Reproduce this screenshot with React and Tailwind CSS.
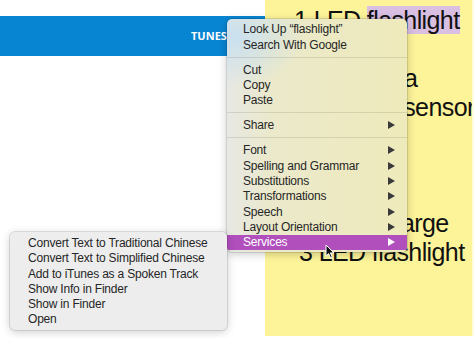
const font = { fontFamily: '"Liberation Sans", Arial, sans-serif' };

const Arrow = ({ light }) => (
    <svg width="7" height="8" viewBox="0 0 7 8" className="shrink-0">
        <polygon points="0,0 7,4 0,8" fill={light ? '#ffffff' : '#3a3a3a'} />
    </svg>
);

const Item = ({ label, sub, active }) => (
    <div
        className={`h-[15.35px] flex items-center justify-between pl-[16px] pr-[12px] text-[12px] tracking-[-0.2px] leading-none ${active ? 'bg-[#b14fbd] text-white' : 'text-[#262626]'}`}
    >
        <span>{label}</span>
        {sub && <Arrow light={active} />}
    </div>
);

const Sep = () => (
    <div className="h-[9.7px] flex items-center">
        <div className="h-px w-full bg-black/10" />
    </div>
);

const Cursor = () => (
    <svg width="10" height="15" viewBox="0 0 10 15" className="absolute left-[325px] top-[244px]">
        <path d="M1 1 L1 12 L3.6 9.6 L5.6 14 L7.3 13.2 L5.4 8.9 L9 8.9 Z" fill="#111" stroke="#fff" strokeWidth="1" />
    </svg>
);

export default function App() {
    return (
        <div className="relative w-[474px] h-[338px] overflow-hidden bg-white flex" style={font}>
            {/* page behind */}
            <div className="w-[265px] pt-[16px]">
                <div className="h-[40px] bg-[#0885d2] flex items-center pl-[191px]">
                    <span className="text-white text-[11px] font-bold" style={{ fontFamily: '"Open Sans", sans-serif' }}>
                        TUNES
                    </span>
                </div>
            </div>

            {/* sticky note */}
            <div className="w-[207px] h-[336px] bg-[#fdf49a] pt-[6px] text-[25px] leading-[29px] tracking-[-0.6px] text-[#111] whitespace-nowrap">
                <div className="pl-[29px]">
                    1 LED <span className="bg-[#d9bfe2]">flashlight</span>
                </div>
                <div className="h-[29px]" />
                <div className="pl-[24px]">Lamp with a</div>
                <div className="pl-[92px]">PIR sensor</div>
                <div className="h-[29px]" />
                <div className="h-[29px]" />
                <div className="h-[29px]" />
                <div className="pl-[103px]">1 Large</div>
                <div className="pl-[34px]">3 LED flashlight</div>
            </div>
            <div className="flex-1 h-[336px] bg-[#fffbe0]" />

            {/* context menu */}
            <div className="absolute left-[227px] top-[19px] w-[180px] h-[233px] rounded-[5px] bg-[radial-gradient(ellipse_70px_50px_at_8px_18px,#c9e0ee,transparent),linear-gradient(to_right,#e7e8e4,#ebe9cb_24%,#eeeabb)] shadow-[0_2px_10px_rgba(0,0,0,0.22)] ring-1 ring-black/10 py-[2.6px] overflow-hidden">
                <Item label="Look Up “flashlight”" />
                <Item label="Search With Google" />
                <Sep />
                <Item label="Cut" />
                <Item label="Copy" />
                <Item label="Paste" />
                <Sep />
                <Item label="Share" sub />
                <Sep />
                <Item label="Font" sub />
                <Item label="Spelling and Grammar" sub />
                <Item label="Substitutions" sub />
                <Item label="Transformations" sub />
                <Item label="Speech" sub />
                <Item label="Layout Orientation" sub />
                <Item label="Services" sub active />
            </div>

            {/* services submenu */}
            <div className="absolute left-[10px] top-[232px] w-[217px] h-[98px] rounded-[5px] bg-[#ededed] shadow-[0_2px_10px_rgba(0,0,0,0.2)] ring-1 ring-black/10 py-[3.3px]">
                {[
                    'Convert Text to Traditional Chinese',
                    'Convert Text to Simplified Chinese',
                    'Add to iTunes as a Spoken Track',
                    'Show Info in Finder',
                    'Show in Finder',
                    'Open',
                ].map((t) => (
                    <div key={t} className="h-[15.3px] flex items-center pl-[18px] text-[12px] tracking-[-0.2px] leading-none text-[#262626]">
                        {t}
                    </div>
                ))}
            </div>

            <Cursor />
        </div>
    );
}
